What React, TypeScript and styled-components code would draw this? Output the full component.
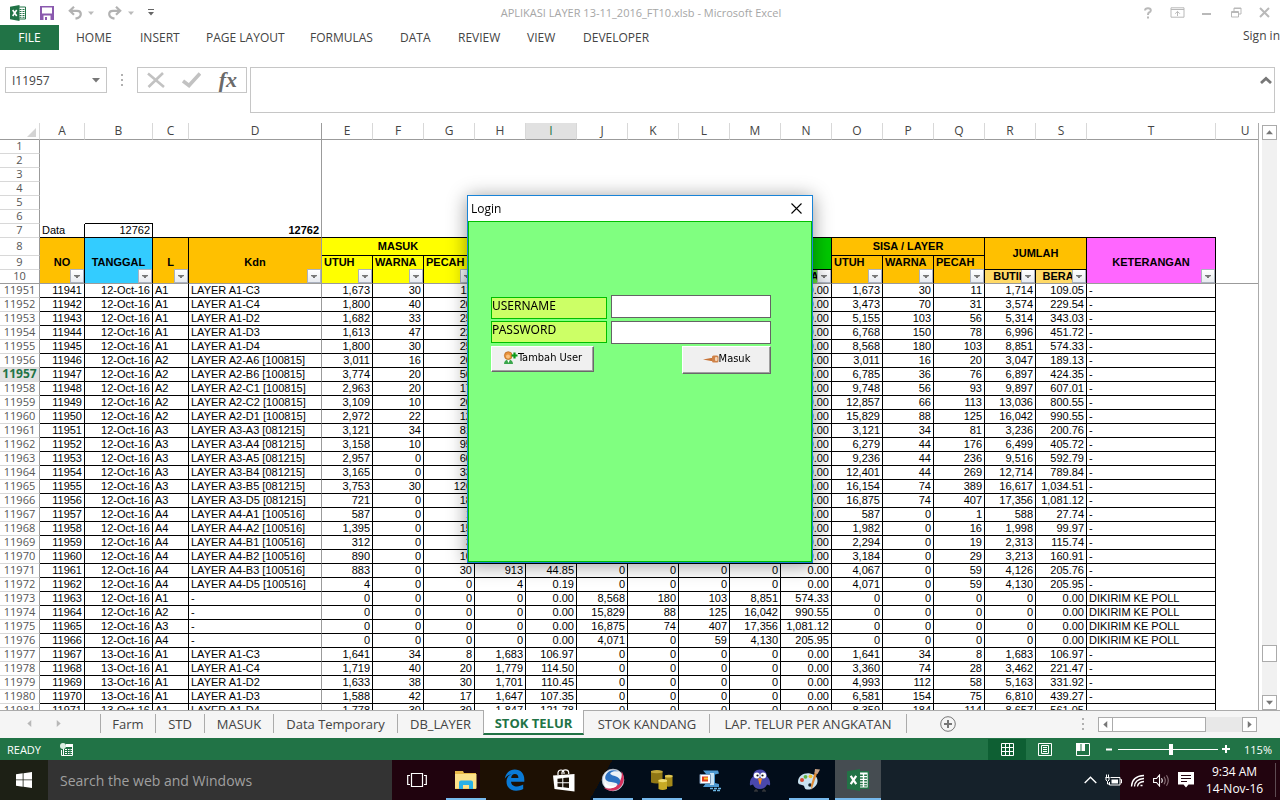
import React from 'react';
import styled, { createGlobalStyle, css } from 'styled-components';

const UI = '"Open Sans", "Noto Sans", sans-serif';
const SHEET = '"Liberation Sans", Arial, sans-serif';
const GREEN = '#217346';
const LINE = '#ababab';
const FREEZE = '#9b9b9b';

const GlobalStyle = createGlobalStyle`
  * { box-sizing: border-box; }
  body { margin: 0; background: #fff; overflow: hidden; font-family: ${UI}; }
  button, input { font: inherit; color: inherit; margin: 0; padding: 0; border: 0; background: none; }
  svg { display: block; }
`;

const Screen = styled.div`
  display: flex;
  flex-direction: column;
  height: 100vh;
  font-size: 12px;
  color: #444;
  background: #fff;
`;

/* ---------- title bar and ribbon ---------- */

const TitleBar = styled.header`
  display: flex;
  align-items: center;
  height: 25px;
  padding: 0 8px 0 10px;
`;

const QuickAccess = styled.div`
  display: flex;
  align-items: center;
  flex: 1;
  gap: 14px;
`;

const QuickPair = styled.div`
  display: flex;
  align-items: center;
  gap: 6px;
`;

const WindowTitle = styled.h1`
  margin: 0;
  font-size: 11px;
  font-weight: 400;
  line-height: 16px;
  color: #a6a6a6;
  white-space: nowrap;
`;

const WindowControls = styled.div`
  display: flex;
  flex: 1;
  justify-content: flex-end;
  align-items: center;
  gap: 14px;
`;

const IconButton = styled.button`
  display: flex;
  align-items: center;
  justify-content: center;
  flex: none;
`;

const Ribbon = styled.nav`
  display: flex;
  height: 25px;
  align-items: stretch;
`;

const FileTab = styled.button`
  width: 59px;
  margin-right: 17px;
  background: ${GREEN};
  color: #fff;
`;

const RibbonTab = styled.button<{ $w: number }>`
  width: ${p => p.$w}px;
  text-align: left;
  white-space: nowrap;
`;

const SignIn = styled.a`
  margin-left: auto;
  align-self: flex-start;
  line-height: 21px;
  color: #444;
  text-decoration: none;
`;

/* ---------- formula bar ---------- */

const FormulaBar = styled.div`
  display: flex;
  align-items: flex-start;
  height: 73px;
  padding: 17px 5px 0;
`;

const NameBox = styled.div`
  display: flex;
  align-items: center;
  width: 102px;
  height: 26px;
  padding: 0 6px;
  border: 1px solid #c6c6c6;
`;

const NameInput = styled.input`
  flex: 1;
  min-width: 0;
  outline: none;
`;

const Dots = styled.div`
  display: flex;
  flex-direction: column;
  gap: 3px;
  align-items: center;
  justify-content: center;
  width: 30px;
  height: 26px;
  span { width: 2px; height: 2px; background: #b0b0b0; }
`;

const FormulaButtons = styled.div`
  display: flex;
  align-items: center;
  justify-content: space-between;
  width: 110px;
  height: 26px;
  padding: 0 9px;
  border: 1px solid #c6c6c6;
`;

const FxLabel = styled.span`
  font: italic bold 22px/24px "Liberation Serif", "Times New Roman", serif;
  color: #6a6a6a;
`;

const FormulaField = styled.div`
  display: flex;
  flex: 1;
  height: 46px;
  margin-left: 3px;
  padding: 8px 2px 0 4px;
  border: 1px solid #c6c6c6;
  align-items: flex-start;
`;

const FormulaInput = styled.input`
  flex: 1;
  outline: none;
`;

/* ---------- worksheet ---------- */

const Workspace = styled.main`
  display: flex;
  flex: 1 1 0;
  min-height: 0;
`;

const GridArea = styled.div`
  flex: 1;
  min-width: 0;
  overflow: hidden;
  border-right: 1px solid ${LINE};
`;

const Sheet = styled.table`
  width: 100%;
  table-layout: fixed;
  border-collapse: separate;
  border-spacing: 0;
  font-family: ${SHEET};
  font-size: 11px;
  line-height: 13px;
  color: #000;
`;

const ColHead = styled.th<{ $active?: boolean; $frozen?: boolean }>`
  height: 17px;
  padding: 0;
  font: 400 12px/16px ${UI};
  color: ${p => (p.$active ? GREEN : '#444')};
  background: ${p => (p.$active ? '#e1e1e1' : '#fff')};
  border-right: 1px solid ${p => (p.$frozen ? FREEZE : '#d8d8d8')};
  border-bottom: 1px solid ${FREEZE};
  &:last-child { padding-left: 16px; border-right: 0; }
`;

const Corner = styled(ColHead)`
  svg { margin: 3px 3px 0 auto; }
`;

const RowHead = styled.th<{ $active?: boolean; $edge?: boolean }>`
  height: 14px;
  padding: 0 0 1px;
  font: ${p => (p.$active ? 700 : 400)} ${p => (p.$active ? 12 : 11)}px/12px ${UI};
  color: ${p => (p.$active ? GREEN : '#555')};
  background: ${p => (p.$active ? '#e1e1e1' : '#fff')};
  border-right: 1px solid ${FREEZE};
  border-bottom: 1px solid ${p => (p.$edge ? FREEZE : '#d8d8d8')};
  white-space: nowrap;
`;

const Cell = styled.td<{
  $align?: 'left' | 'right';
  $right?: string;
  $bottom?: string;
  $bold?: boolean;
}>`
  height: 14px;
  padding: 0 2px;
  overflow: hidden;
  white-space: nowrap;
  text-align: ${p => p.$align ?? 'left'};
  font-weight: ${p => (p.$bold ? 700 : 400)};
  ${p => p.$right && css`border-right: 1px solid ${p.$right};`}
  ${p => p.$bottom && css`border-bottom: 1px solid ${p.$bottom};`}
`;

const Head = styled.th<{
  $bg: string;
  $align?: 'left' | 'center';
  $top?: number;
  $right?: string;
  $last?: boolean;
}>`
  position: relative;
  padding: ${p => p.$top ?? 0}px 2px 0;
  overflow: hidden;
  white-space: nowrap;
  vertical-align: ${p => (p.$align === 'left' ? 'top' : 'middle')};
  text-align: ${p => p.$align ?? 'center'};
  background: ${p => p.$bg};
  border-right: 1px solid ${p => p.$right ?? '#000'};
  border-bottom: 1px solid ${p => (p.$last ? FREEZE : '#000')};
`;

const FilterButton = styled.button`
  position: absolute;
  right: 0;
  bottom: 0;
  display: flex;
  align-items: center;
  justify-content: center;
  width: 14px;
  height: 14px;
  border: 1px solid #abb2bf;
  background: linear-gradient(#fff, #e8ebf0);
`;

const Filter = ({ name }: { name: string }) => (
  <FilterButton aria-label={`Filter column ${name}`}>
    <svg width="6" height="3" viewBox="0 0 6 3"><path d="M0 0h6v1L4 2v1H2V2L0 1z" fill="#777" /></svg>
  </FilterButton>
);

const VerticalBar = styled.div`
  display: flex;
  flex-direction: column;
  width: 21px;
  padding: 2px 3px 0;
`;

const ScrollButton = styled.button`
  display: flex;
  align-items: center;
  justify-content: center;
  flex: none;
  width: 15px;
  height: 15px;
  border: 1px solid ${LINE};
  background: #fff;
`;

const VerticalTrack = styled.div`
  display: flex;
  flex-direction: column;
  justify-content: flex-end;
  flex: 1;
  padding-bottom: 33px;
  background: #f1f1f1;
`;

const VerticalThumb = styled.div`
  height: 17px;
  border: 1px solid ${LINE};
  background: #fff;
`;

/* ---------- sheet tabs ---------- */

const TabStrip = styled.div`
  display: flex;
  height: 28px;
  padding-right: 23px;
  background: #f5f5f5;
  box-shadow: inset 0 1px ${LINE};
`;

const TabArrows = styled.div`
  display: flex;
  align-items: center;
  gap: 22px;
  width: 100px;
  padding: 0 0 2px 26px;
`;

const SheetTab = styled.button<{ $w: number; $active?: boolean; $plain?: boolean }>`
  width: ${p => p.$w}px;
  height: 19px;
  margin-top: 4px;
  font-size: 13px;
  line-height: 18px;
  white-space: nowrap;
  text-align: center;
  border-left: 1px solid ${p => (p.$plain ? 'transparent' : LINE)};
  ${p => p.$active && css`
    height: 25px;
    margin-top: 0;
    padding-top: 2px;
    font-weight: 700;
    color: ${GREEN};
    background: #fff;
    border-right: 1px solid ${LINE};
    border-bottom: 2px solid ${GREEN};
  `}
`;

const NewSheet = styled(IconButton)`
  height: 19px;
  margin-top: 4px;
  padding-left: 33px;
  border-left: 1px solid ${LINE};
`;

const HorizontalBar = styled.div`
  display: flex;
  align-items: center;
  margin-left: auto;
`;

const HorizontalTrack = styled.div`
  width: 129px;
  height: 15px;
  background: #e8e8e8;
`;

const HorizontalThumb = styled.div`
  width: 93px;
  height: 15px;
  border: 1px solid ${LINE};
  border-left: 0;
  background: #fff;
`;

/* ---------- status bar ---------- */

const StatusBar = styled.footer`
  display: flex;
  align-items: center;
  height: 22px;
  padding: 0 8px 0 7px;
  background: ${GREEN};
  color: #fff;
  font-size: 11px;
`;

const StatusText = styled.span`
  width: 53px;
`;

const ViewButton = styled.button<{ $active?: boolean }>`
  display: flex;
  align-items: center;
  justify-content: center;
  width: 38px;
  height: 21px;
  background: ${p => (p.$active ? '#0e5f33' : 'transparent')};
`;

const StatusRight = styled.div`
  display: flex;
  align-items: center;
  margin-left: auto;
`;

const ZoomSlider = styled.input`
  appearance: none;
  width: 100px;
  height: 14px;
  margin: 0 4px;
  background: linear-gradient(#fff, #fff) center / 100% 1px no-repeat;
  &::-webkit-slider-thumb {
    appearance: none;
    width: 4px;
    height: 11px;
    background: #fff;
  }
`;

const ZoomValue = styled.span`
  width: 42px;
  text-align: right;
`;

/* ---------- task bar ---------- */

const TaskBar = styled.footer`
  display: flex;
  height: 40px;
  color: #fff;
  background:
    linear-gradient(90deg, #20030e 37.5%, transparent 37.5% 68%, #15212a 68% 87.5%, #22040f 87.5%),
    linear-gradient(120deg, #1d1003 47%, #020d1a 47%);
`;

const StartButton = styled(IconButton)`
  width: 48px;
  background: #1d2015;
`;

const SearchBox = styled.input`
  width: 344px;
  padding: 0 12px;
  font-size: 14px;
  background: #333;
  outline: none;
  &::placeholder { color: #a0a0a0; opacity: 1; }
`;

const TaskButton = styled.button<{ $open?: boolean; $active?: boolean }>`
  display: flex;
  align-items: center;
  justify-content: center;
  width: 49px;
  background:
    linear-gradient(${p => (p.$open ? '#76b9ed, #76b9ed' : 'transparent, transparent')}) center bottom / ${p => (p.$active ? 46 : 40)}px 2px no-repeat,
    linear-gradient(${p => (p.$active ? '#454c51, #454c51' : 'transparent, transparent')}) center / 46px 100% no-repeat;
`;

const Tray = styled.div`
  display: flex;
  align-items: center;
  gap: 8px;
  margin-left: auto;
  padding-right: 4px;
`;

const Clock = styled.time`
  width: 74px;
  padding-right: 8px;
  border-right: 1px solid #5d4b52;
  font-size: 12px;
  line-height: 17px;
  text-align: center;
  white-space: nowrap;
`;

/* ---------- login window ---------- */

const Overlay = styled.div`
  position: fixed;
  inset: 0;
  display: flex;
  justify-content: center;
  align-items: flex-start;
  padding-top: 195px;
`;

const Dialog = styled.section`
  width: 346px;
  border: 1px solid #1883d7;
  background: #fff;
  color: #000;
  box-shadow: 0 2px 18px rgba(0, 0, 0, 0.42);
`;

const DialogTitle = styled.div`
  display: flex;
  align-items: center;
  justify-content: space-between;
  height: 25px;
  padding: 0 10px 0 3px;
`;

const DialogHeading = styled.h2`
  margin: 0;
  font-size: 12px;
  font-weight: 400;
`;

const LoginForm = styled.form`
  height: 341px;
  padding: 73px 40px 0 22px;
  border: 1px solid #00c000;
  background: #80ff80;
  font: 12px/16px "Noto Sans", sans-serif;
`;

const Fields = styled.div`
  display: flex;
  justify-content: space-between;
`;

const LabelColumn = styled.div`
  display: flex;
  flex-direction: column;
  gap: 2px;
  padding-top: 2px;
`;

const InputColumn = styled.div`
  display: flex;
  flex-direction: column;
  gap: 3px;
`;

const FieldLabel = styled.label`
  width: 116px;
  height: 22px;
  border: 1px solid #00c000;
  background: #ccff66;
`;

const FieldInput = styled.input`
  width: 160px;
  height: 23px;
  padding: 0 3px;
  border: 1px solid #646464;
  background: #fff;
  outline: none;
`;

const Actions = styled.div`
  display: flex;
  justify-content: space-between;
  align-items: flex-start;
  margin-top: 2px;
`;

const ActionButton = styled.button<{ $w: number; $h: number }>`
  display: flex;
  align-items: center;
  justify-content: center;
  width: ${p => p.$w}px;
  height: ${p => p.$h}px;
  padding-bottom: 3px;
  background: #f0f0f0;
  border: 1px solid;
  border-color: #fff #696969 #696969 #fff;
  box-shadow: inset -1px -1px #a0a0a0;
  font: 11px/14px "DejaVu Sans Condensed", "DejaVu Sans", sans-serif;
  white-space: nowrap;
`;

/* ---------- icons ---------- */

const ExcelIcon = ({ size }: { size: number }) => (
  <svg width={size} height={size} viewBox="0 0 16 16">
    <path d="M8 2h7.500v12H8z" fill="#fff" stroke={GREEN} />
    <path d="M9.500 4.500h2M12.500 4.500h2M9.500 6.500h2M12.500 6.500h2M9.500 8.500h2M12.500 8.500h2M9.500 10.500h2M12.500 10.500h2M9.500 12.300h2M12.500 12.300h2" stroke={GREEN} />
    <path d="M0 1.700 9.500 0v16L0 14.300z" fill={GREEN} />
    <path d="M2.700 5l4 6M6.700 5l-4 6" stroke="#fff" strokeWidth="1.600" />
  </svg>
);

const Caret = ({ fill = '#777', w = 7, dir = 'down' }: { fill?: string; w?: number; dir?: string }) => {
  const turn = { down: 0, left: 90, up: 180, right: 270 }[dir];
  return (
    <svg width={w} height={w} viewBox="0 0 8 8"><path d="M0 2h8L4 6.500z" fill={fill} transform={`rotate(${turn} 4 4)`} /></svg>
  );
};

const UndoIcon = ({ flip }: { flip?: boolean }) => (
  <svg width="14" height="14" viewBox="0 0 14 14" fill="none" stroke="#b2b2b2" strokeWidth="2.200">
    <g transform={flip ? 'translate(14 0) scale(-1 1)' : undefined}>
      <path d="M6 .8 1.800 4.800l4.200 4M2 4.800h7c2.500 0 3.800 1.500 3.800 3.200 0 2.200-2 4-5.300 4.600" />
    </g>
  </svg>
);

/* ---------- data ---------- */

const COLUMNS: [string, number | undefined][] = [
  ['A', 45], ['B', 68], ['C', 36], ['D', 133], ['E', 51], ['F', 51], ['G', 51], ['H', 51],
  ['I', 51], ['J', 51], ['K', 51], ['L', 51], ['M', 51], ['N', 51], ['O', 51], ['P', 51],
  ['Q', 51], ['R', 51], ['S', 51], ['T', 129], ['U', undefined],
];

// pen | kandang | masuk | keluar | sisa, each group split on spaces
const RECORDS = `
A1|LAYER A1-C3|1,673 30 11 . .|. . . . 0.00|1,673 30 11 1,714 109.05
A1|LAYER A1-C4|1,800 40 20 . .|. . . . 0.00|3,473 70 31 3,574 229.54
A1|LAYER A1-D2|1,682 33 25 . .|. . . . 0.00|5,155 103 56 5,314 343.03
A1|LAYER A1-D3|1,613 47 22 . .|. . . . 0.00|6,768 150 78 6,996 451.72
A1|LAYER A1-D4|1,800 30 25 . .|. . . . 0.00|8,568 180 103 8,851 574.33
A2|LAYER A2-A6 [100815]|3,011 16 20 . .|. . . . 0.00|3,011 16 20 3,047 189.13
A2|LAYER A2-B6 [100815]|3,774 20 56 . .|. . . . 0.00|6,785 36 76 6,897 424.35
A2|LAYER A2-C1 [100815]|2,963 20 17 . .|. . . . 0.00|9,748 56 93 9,897 607.01
A2|LAYER A2-C2 [100815]|3,109 10 20 . .|. . . . 0.00|12,857 66 113 13,036 800.55
A2|LAYER A2-D1 [100815]|2,972 22 12 . .|. . . . 0.00|15,829 88 125 16,042 990.55
A3|LAYER A3-A3 [081215]|3,121 34 81 . .|. . . . 0.00|3,121 34 81 3,236 200.76
A3|LAYER A3-A4 [081215]|3,158 10 95 . .|. . . . 0.00|6,279 44 176 6,499 405.72
A3|LAYER A3-A5 [081215]|2,957 0 60 . .|. . . . 0.00|9,236 44 236 9,516 592.79
A3|LAYER A3-B4 [081215]|3,165 0 33 . .|. . . . 0.00|12,401 44 269 12,714 789.84
A3|LAYER A3-B5 [081215]|3,753 30 120 . .|. . . . 0.00|16,154 74 389 16,617 1,034.51
A3|LAYER A3-D5 [081215]|721 0 18 . .|. . . . 0.00|16,875 74 407 17,356 1,081.12
A4|LAYER A4-A1 [100516]|587 0 1 . .|. . . . 0.00|587 0 1 588 27.74
A4|LAYER A4-A2 [100516]|1,395 0 15 . .|. . . . 0.00|1,982 0 16 1,998 99.97
A4|LAYER A4-B1 [100516]|312 0 3 . .|. . . . 0.00|2,294 0 19 2,313 115.74
A4|LAYER A4-B2 [100516]|890 0 10 . .|. . . . 0.00|3,184 0 29 3,213 160.91
A4|LAYER A4-B3 [100516]|883 0 30 913 44.85|0 0 0 0 0.00|4,067 0 59 4,126 205.76
A4|LAYER A4-D5 [100516]|4 0 0 4 0.19|0 0 0 0 0.00|4,071 0 59 4,130 205.95
A1|-|0 0 0 0 0.00|8,568 180 103 8,851 574.33|0 0 0 0 0.00
A2|-|0 0 0 0 0.00|15,829 88 125 16,042 990.55|0 0 0 0 0.00
A3|-|0 0 0 0 0.00|16,875 74 407 17,356 1,081.12|0 0 0 0 0.00
A4|-|0 0 0 0 0.00|4,071 0 59 4,130 205.95|0 0 0 0 0.00
A1|LAYER A1-C3|1,641 34 8 1,683 106.97|0 0 0 0 0.00|1,641 34 8 1,683 106.97
A1|LAYER A1-C4|1,719 40 20 1,779 114.50|0 0 0 0 0.00|3,360 74 28 3,462 221.47
A1|LAYER A1-D2|1,633 38 30 1,701 110.45|0 0 0 0 0.00|4,993 112 58 5,163 331.92
A1|LAYER A1-D3|1,588 42 17 1,647 107.35|0 0 0 0 0.00|6,581 154 75 6,810 439.27
A1|LAYER A1-D4|1,778 30 39 1,847 121.78|0 0 0 0 0.00|8,359 184 114 8,657 561.05
`.trim().split('\n').map((line, i) => {
  const [pen, kandang, ...groups] = line.split('|');
  return {
    no: 11941 + i,
    date: i < 26 ? '12-Oct-16' : '13-Oct-16',
    pen,
    kandang,
    values: groups.join(' ').split(' ').map(v => (v === '.' ? '' : v)),
    note: kandang === '-' ? 'DIKIRIM KE POLL' : '-',
  };
});

const RIBBON: [string, number][] = [
  ['HOME', 64], ['INSERT', 66], ['PAGE LAYOUT', 104], ['FORMULAS', 90],
  ['DATA', 58], ['REVIEW', 69], ['VIEW', 56], ['DEVELOPER', 80],
];

const SHEETS: [string, number][] = [
  ['Farm', 55], ['STD', 49], ['MASUK', 69], ['Data Temporary', 124], ['DB_LAYER', 86],
  ['STOK TELUR', 101], ['STOK KANDANG', 125], ['LAP. TELUR PER ANGKATAN', 197],
];

const ORANGE = '#ffc000';
const YELLOW = '#ffff00';
const DEEP_GREEN = '#00c800';

function Worksheet() {
  return (
    <Sheet>
      <colgroup>
        <col width={40} />
        {COLUMNS.map(([name, w]) => <col key={name} width={w} />)}
      </colgroup>
      <thead>
        <tr>
          <Corner>
            <svg width="9" height="9" viewBox="0 0 9 9"><path d="M9 0v9H0z" fill="#d4d4d4" /></svg>
          </Corner>
          {COLUMNS.map(([name]) => (
            <ColHead key={name} scope="col" $active={name === 'I'} $frozen={name === 'D'}>{name}</ColHead>
          ))}
        </tr>
      </thead>
      <tbody>
        {[1, 2, 3, 4, 5, 6].map(n => (
          <tr key={n}>
            <RowHead scope="row">{n}</RowHead>
            <Cell />
            <Cell $bottom={n === 6 ? '#000' : undefined} />
            <Cell />
            <Cell $right={FREEZE} />
            <Cell colSpan={17} />
          </tr>
        ))}
        <tr>
          <RowHead scope="row">7</RowHead>
          <Cell $right="#000" $bottom="#000">Data</Cell>
          <Cell $right="#000" $bottom="#000" $align="right">12762</Cell>
          <Cell $bottom="#000" />
          <Cell $right={FREEZE} $bottom="#000" $align="right" $bold>12762</Cell>
          <Cell colSpan={16} $bottom="#000" />
          <Cell />
        </tr>
        <tr style={{ height: 18 }}>
          <RowHead scope="row">8</RowHead>
          <Head rowSpan={3} $bg={ORANGE} $top={4} $last>NO<Filter name="A" /></Head>
          <Head rowSpan={3} $bg="#33ccff" $top={4} $last>TANGGAL<Filter name="B" /></Head>
          <Head rowSpan={3} $bg={ORANGE} $top={4} $last>L<Filter name="C" /></Head>
          <Head rowSpan={3} $bg={ORANGE} $top={4} $last $right={FREEZE}>Kdn<Filter name="D" /></Head>
          <Head colSpan={3} $bg={YELLOW}>MASUK</Head>
          <Head colSpan={2} rowSpan={2} $bg={YELLOW} />
          <Head colSpan={3} $bg={DEEP_GREEN} />
          <Head colSpan={2} rowSpan={2} $bg={DEEP_GREEN} />
          <Head colSpan={3} $bg={ORANGE}>SISA / LAYER</Head>
          <Head colSpan={2} rowSpan={2} $bg={ORANGE}>JUMLAH</Head>
          <Head rowSpan={3} $bg="#ff66ff" $top={4} $last>KETERANGAN<Filter name="T" /></Head>
          <Cell />
        </tr>
        <tr>
          <RowHead scope="row">9</RowHead>
          <Head rowSpan={2} $bg={YELLOW} $align="left" $last>UTUH<Filter name="E" /></Head>
          <Head rowSpan={2} $bg={YELLOW} $align="left" $last>WARNA<Filter name="F" /></Head>
          <Head rowSpan={2} $bg={YELLOW} $align="left" $last>PECAH<Filter name="G" /></Head>
          <Head rowSpan={2} $bg={DEEP_GREEN} $last />
          <Head rowSpan={2} $bg={DEEP_GREEN} $last />
          <Head rowSpan={2} $bg={DEEP_GREEN} $last />
          <Head rowSpan={2} $bg={ORANGE} $align="left" $last>UTUH<Filter name="O" /></Head>
          <Head rowSpan={2} $bg={ORANGE} $align="left" $last>WARNA<Filter name="P" /></Head>
          <Head rowSpan={2} $bg={ORANGE} $align="left" $last>PECAH<Filter name="Q" /></Head>
          <Cell />
        </tr>
        <tr>
          <RowHead scope="row" $edge>10</RowHead>
          <Head $bg="#ffff99" $last />
          <Head $bg="#ffff99" $last />
          <Head $bg="#66e03c" $last />
          <Head $bg="#66e03c" $last>BERAT<Filter name="N" /></Head>
          <Head $bg="#ffd966" $last>BUTIR<Filter name="R" /></Head>
          <Head $bg="#ffd966" $last>BERAT<Filter name="S" /></Head>
          <Cell $bottom={FREEZE} />
        </tr>
        {RECORDS.map(r => (
          <tr key={r.no}>
            <RowHead scope="row" $active={r.no === 11947}>{r.no + 10}</RowHead>
            <Cell $align="right" $right="#000" $bottom="#000">{r.no}</Cell>
            <Cell $align="right" $right="#000" $bottom="#000">{r.date}</Cell>
            <Cell $right="#000" $bottom="#000">{r.pen}</Cell>
            <Cell $right={FREEZE} $bottom="#000">{r.kandang}</Cell>
            {r.values.map((v, i) => (
              <Cell key={i} $align="right" $right="#000" $bottom="#000">{v}</Cell>
            ))}
            <Cell $right="#000" $bottom="#000">{r.note}</Cell>
            <Cell />
          </tr>
        ))}
      </tbody>
    </Sheet>
  );
}

function LoginWindow() {
  return (
    <Overlay>
      <Dialog role="dialog" aria-labelledby="login-title">
        <DialogTitle>
          <DialogHeading id="login-title">Login</DialogHeading>
          <IconButton aria-label="Close">
            <svg width="11" height="11" viewBox="0 0 11 11"><path d="M.5.500l10 10M10.500.500l-10 10" stroke="#000" strokeWidth="1.100" /></svg>
          </IconButton>
        </DialogTitle>
        <LoginForm onSubmit={e => e.preventDefault()}>
          <Fields>
            <LabelColumn>
              <FieldLabel htmlFor="username">USERNAME</FieldLabel>
              <FieldLabel htmlFor="password">PASSWORD</FieldLabel>
            </LabelColumn>
            <InputColumn>
              <FieldInput id="username" type="text" />
              <FieldInput id="password" type="password" />
            </InputColumn>
          </Fields>
          <Actions>
            <ActionButton type="button" $w={103} $h={26}>
              <svg width="15" height="14" viewBox="0 0 15 14">
                <path d="M1 13c0-3 2-4.500 4.500-4.500S10 10 10 13z" fill="#3aa64c" />
                <path d="M4 8.500h3L5.500 12z" fill="#fff" />
                <circle cx="5.300" cy="4.600" r="3.900" fill="#e8923a" stroke="#b5651d" strokeWidth=".7" />
                <circle cx="5" cy="5.500" r="2" fill="#fbc27f" />
                <path d="M11.500 1.500v6M8.500 4.500h6" stroke="#0a9a1a" strokeWidth="2.200" />
              </svg>
              Tambah User
            </ActionButton>
            <ActionButton type="submit" $w={89} $h={28}>
              <svg width="16" height="10" viewBox="0 0 16 10">
                <path d="M0 5.500 8 4h2v3H8z" fill="#c87437" />
                <rect x="9" y="1.500" width="6.500" height="7" rx="1.500" fill="#cf8248" />
                <rect x="12" y="3" width="2.500" height="4" rx="1" fill="#f5d4b4" />
              </svg>
              Masuk
            </ActionButton>
          </Actions>
        </LoginForm>
      </Dialog>
    </Overlay>
  );
}

function Tasks() {
  return (
    <>
      <TaskButton aria-label="Task view">
        <svg width="20" height="16" viewBox="0 0 20 16" fill="none" stroke="#fff" strokeWidth="1.200">
          <path d="M4.500 1.500h11v13h-11zM3 3.500H.7v9H3M17 3.500h2.300v9H17" />
        </svg>
      </TaskButton>
      <TaskButton $open aria-label="File Explorer">
        <svg width="22" height="20" viewBox="0 0 22 20">
          <path d="M0 1h8l1 2h12v16H0z" fill="#e9b949" />
          <path d="M0 4h21.500v14.500H0z" fill="#fce08a" />
          <path d="M4 19v-6.500q0-2 2-2h10q2 0 2 2V19h-4v-4H8v4z" fill="#29b0e8" />
        </svg>
      </TaskButton>
      <TaskButton aria-label="Edge">
        <svg width="21" height="22" viewBox="0 0 21 22">
          <path d="M.8 9.800C1.500 4.200 5.400.6 10.700.6c6 0 9.600 4.200 9.600 9.800v2.300H7c.2 3.200 2.800 4.700 6 4.700 2.300 0 4.300-.6 6.200-1.800v4.500c-2 1.100-4.300 1.600-7 1.600-5.800 0-9.700-3.500-9.700-8.900 0-3.500 1.800-6.300 5-7.800C4.300 5.900 2.200 7.500.8 9.800zM7.200 9h7.200c0-2.700-1.300-4.100-3.500-4.100S7.400 6.400 7.200 9z" fill="#0a7ad6" />
        </svg>
      </TaskButton>
      <TaskButton aria-label="Store">
        <svg width="22" height="23" viewBox="0 0 22 23">
          <path d="M0 6.500 21.500 5v17.500L1.500 20z" fill="#fff" />
          <path d="M5 6V3.500Q5.500 1 8 1t3 2.500V5M9 5.500V3.500Q9.500.8 12.500.8t3.200 2.700V5" fill="none" stroke="#fff" strokeWidth="1.200" />
          <path d="M4.500 9.700l4.800-.5v4H4.500zM10.300 9.100l5.700-.6v4.700h-5.700zM4.500 14.200h4.800v4l-4.800-.5zM10.300 14.200H16V19l-5.700-.7z" fill="#1a1108" />
        </svg>
      </TaskButton>
      <TaskButton $open aria-label="Browser">
        <svg width="24" height="24" viewBox="0 0 24 24">
          <circle cx="12" cy="12" r="10.800" fill="#eef2f7" stroke="#b9c2cf" strokeWidth=".8" />
          <path d="M20.500 3c3.500 5 3 12-1.500 16.500S6 23.500 2.500 19.500c5.500 2 11 .8 14.500-3.500S21.500 7 20.500 3z" fill="#d6305c" />
          <path d="M17.500 3.500C12.500.8 6.500 2.800 4.700 7.200c-1.700 4.500 1.300 6.300 5.300 6.800s7 1 7 3.500c3.500-3 2.800-7.500-2.500-9.200-4-1.200-6-2-4.800-3.500s4.300-2 7.800-1.300z" fill="#2e72c2" />
          <path d="M4 13.500c2 4.500 7 6 12.500 3.500-3 4-10.500 4.500-13 .5z" fill="#fff" />
        </svg>
      </TaskButton>
      <TaskButton $open aria-label="Database">
        <svg width="24" height="22" viewBox="0 0 24 22">
          <path d="M1 2h11.500v11.500q-6 2-11.500 0z" fill="#8f7715" /><path d="M1 2q6-2 11.500 0v1.500q-6 1.500-11.500 0z" fill="#c4aa3a" />
          <path d="M15 6.500h7.500V17q-4 1.500-7.500 0z" fill="#a58a18" /><path d="M15 6.500q4-1.500 7.500 0V8q-4 1.200-7.500 0z" fill="#e0c755" />
          <path d="M8.500 11H17v9q-4.500 2-8.500 0z" fill="#c7aa25" /><path d="M8.500 11q4.500-1.800 8.500 0v1.500q-4.500 1.500-8.500 0z" fill="#eedb72" />
        </svg>
      </TaskButton>
      <TaskButton aria-label="Archive tool">
        <svg width="23" height="23" viewBox="0 0 23 23">
          <path d="M4 1.500h15l1 3-4 1v8.500l4 1v3H4l3-4V5z" fill="#4f9ad2" />
          <path d="M11 4h4v12h-4z" fill="#c7e2f3" />
          <path d="M1 5.500h10.500v9H1z" fill="#fff" stroke="#7d97b4" />
          <path d="M3 7.500h6v5H3z" fill="#e33d1e" /><path d="M5 8.500h4v2H5z" fill="#ffc62e" />
          <path d="M11 19.500h11M14 21.500h8" stroke="#6db6e4" strokeWidth="1.500" strokeDasharray="3 1" />
        </svg>
      </TaskButton>
      <TaskButton aria-label="Bird">
        <svg width="22" height="23" viewBox="0 0 22 23">
          <path d="M11 .5c4.500 0 7 3 7 7 2.500 2 3.500 5 3 9l-3-1c-1 3-4 4.500-7 4.500s-6-1.500-7-4.500l-3 1c-.5-4 .5-7 3-9 0-4 2.500-7 7-7z" fill="#4a48ad" />
          <circle cx="7.800" cy="6.500" r="3" fill="#fff" /><circle cx="14.200" cy="6.500" r="3" fill="#fff" />
          <circle cx="8.500" cy="6.500" r="1.100" fill="#111" /><circle cx="13.500" cy="6.500" r="1.100" fill="#111" />
          <path d="M9 9.500q2-1 4 0l-1.500 6h-1z" fill="#f18a22" />
          <path d="M7 20v2M15 20v2M5 22h4M13 22h4" stroke="#444" />
        </svg>
      </TaskButton>
      <TaskButton $open aria-label="Paint">
        <svg width="24" height="24" viewBox="0 0 24 24">
          <path d="M1 14C1 8 7 4.500 13 5.500c5 .7 8 4 7.500 8-.5 5-5.500 8.500-10.500 8-3-.3-2-3-3.500-4S1 17 1 14z" fill="#c9e2f0" />
          <circle cx="5" cy="12" r="2" fill="#d9482e" /><circle cx="8.500" cy="8.800" r="1.900" fill="#5eb445" />
          <circle cx="13.500" cy="8.300" r="1.900" fill="#f0c02d" /><circle cx="13" cy="17" r="1.800" fill="#15232c" />
          <path d="M20.500 4 16 17.500 14.500 22l-.5-5L18 3.500z" fill="#e08b36" />
          <path d="M17.500 5 18 1l5 .5-2.500 4.500z" fill="#c9a284" />
        </svg>
      </TaskButton>
      <TaskButton $open $active aria-label="Excel"><ExcelIcon size={22} /></TaskButton>
    </>
  );
}

export default function App() {
  return (
    <>
      <GlobalStyle />
      <Screen>
        <TitleBar>
          <QuickAccess>
            <ExcelIcon size={16} />
            <IconButton aria-label="Save">
              <svg width="14" height="14" viewBox="0 0 14 14">
                <path d="M0 0h14v14H0z" fill="#8a59ae" /><path d="M2 1.500h10v6H2zM3.500 9.500h7V14h-7z" fill="#fff" />
                <path d="M5 11h2v3H5z" fill="#8a59ae" />
              </svg>
            </IconButton>
            <QuickPair>
              <IconButton aria-label="Undo"><UndoIcon /></IconButton>
              <Caret w={6} fill="#bbb" />
            </QuickPair>
            <QuickPair>
              <IconButton aria-label="Redo"><UndoIcon flip /></IconButton>
              <Caret w={6} fill="#bbb" />
            </QuickPair>
            <IconButton aria-label="Customize">
              <svg width="6" height="7" viewBox="0 0 6 7"><path d="M0 0h6v1H0zM0 3h6L3 6.500z" fill="#666" /></svg>
            </IconButton>
          </QuickAccess>
          <WindowTitle>APLIKASI LAYER 13-11_2016_FT10.xlsb - Microsoft Excel</WindowTitle>
          <WindowControls>
            <IconButton aria-label="Help">
              <svg width="16" height="12" viewBox="0 0 16 12" fill="none" stroke="#b9b9b9" strokeWidth="2"><path d="M5 3.500Q5.200 1.200 8 1.200t2.800 2.300Q10.800 5 9 5.500 8 6 8 8M8 9.500v2" /></svg>
            </IconButton>
            <IconButton aria-label="Ribbon display options">
              <svg width="15" height="11" viewBox="0 0 15 11" fill="none" stroke="#b9b9b9"><path d="M1 .8h13v9.400H1zM1 2.500h13M7.500 9V4.500M5.200 6.700l2.300-2.300 2.300 2.300" /></svg>
            </IconButton>
            <IconButton aria-label="Minimize">
              <svg width="15" height="11" viewBox="0 0 15 11"><path d="M3 6h9v2H3z" fill="#b9b9b9" /></svg>
            </IconButton>
            <IconButton aria-label="Restore">
              <svg width="15" height="11" viewBox="0 0 15 11" fill="none" stroke="#b9b9b9"><path d="M3.500 4.500h7v5.500h-7zM3.500 5.500h7M6 4V1h7v6h-2.500M6 1.500h7" /></svg>
            </IconButton>
            <IconButton aria-label="Close Excel">
              <svg width="15" height="11" viewBox="0 0 15 11" stroke="#b9b9b9" strokeWidth="2"><path d="M3 1l9 9M12 1l-9 9" /></svg>
            </IconButton>
          </WindowControls>
        </TitleBar>
        <Ribbon>
          <FileTab>FILE</FileTab>
          {RIBBON.map(([name, w]) => <RibbonTab key={name} $w={w}>{name}</RibbonTab>)}
          <SignIn href="#signin">Sign in</SignIn>
        </Ribbon>
        <FormulaBar>
          <NameBox>
            <NameInput aria-label="Name box" defaultValue="I11957" />
            <IconButton aria-label="Show names"><Caret w={8} /></IconButton>
          </NameBox>
          <Dots><span /><span /><span /></Dots>
          <FormulaButtons>
            <IconButton aria-label="Cancel">
              <svg width="18" height="16" viewBox="0 0 18 16" stroke="#c2c2c2" strokeWidth="2.600"><path d="M1 1.500 17 15M16 1 1.500 15" /></svg>
            </IconButton>
            <IconButton aria-label="Enter">
              <svg width="19" height="16" viewBox="0 0 19 16" fill="none" stroke="#c2c2c2" strokeWidth="3.600"><path d="M1 9l6 4.500L18 1.500" /></svg>
            </IconButton>
            <IconButton aria-label="Insert function"><FxLabel>fx</FxLabel></IconButton>
          </FormulaButtons>
          <FormulaField>
            <FormulaInput aria-label="Formula" />
            <IconButton aria-label="Collapse formula bar">
              <svg width="12" height="8" viewBox="0 0 12 8" fill="none" stroke="#777" strokeWidth="2.800"><path d="M1 7l5-4.500L11 7" /></svg>
            </IconButton>
          </FormulaField>
        </FormulaBar>
        <Workspace>
          <GridArea><Worksheet /></GridArea>
          <VerticalBar>
            <ScrollButton aria-label="Scroll up"><Caret dir="up" /></ScrollButton>
            <VerticalTrack><VerticalThumb /></VerticalTrack>
            <ScrollButton aria-label="Scroll down"><Caret /></ScrollButton>
          </VerticalBar>
        </Workspace>
        <TabStrip>
          <TabArrows>
            <Caret dir="left" w={7} fill="#b8b8b8" />
            <Caret dir="right" w={7} fill="#b8b8b8" />
          </TabArrows>
          {SHEETS.map(([name, w]) => (
            <SheetTab key={name} $w={w} $active={name === 'STOK TELUR'} $plain={name === 'STOK KANDANG'}>{name}</SheetTab>
          ))}
          <NewSheet aria-label="New sheet">
            <svg width="16" height="16" viewBox="0 0 16 16" fill="none" stroke="#777"><circle cx="8" cy="8" r="7.300" /><path d="M4 8h8M8 4v8" strokeWidth="2" /></svg>
          </NewSheet>
          <HorizontalBar>
            <Dots><span /><span /><span /></Dots>
            <ScrollButton aria-label="Scroll left"><Caret dir="left" /></ScrollButton>
            <HorizontalTrack><HorizontalThumb /></HorizontalTrack>
            <ScrollButton aria-label="Scroll right"><Caret dir="right" /></ScrollButton>
          </HorizontalBar>
        </TabStrip>
        <StatusBar>
          <StatusText>READY</StatusText>
          <svg width="14" height="13" viewBox="0 0 14 13">
            <path d="M3.500 3h9v9.500h-9z" fill="none" stroke="#fff" />
            <path d="M6 1h7v3H6z" fill="#fff" />
            <path d="M1.500 7v5.500H5M5 6.500h2M8 6.500h1.500M10.500 6.500H12M5 8.500h2M8 8.500h1.500M10.500 8.500H12M5 10.500h2M8 10.500h1.500M10.500 10.500H12" stroke="#fff" fill="none" />
            <circle cx="3" cy="3" r="3" fill="#dbeee2" />
          </svg>
          <StatusRight>
            <ViewButton $active aria-label="Normal view">
              <svg width="13" height="13" viewBox="0 0 13 13" fill="none" stroke="#fff"><path d="M.5.500h12v12H.5zM4.500.500v12M8.500.500v12M.5 4.500h12M.5 8.500h12" /></svg>
            </ViewButton>
            <ViewButton aria-label="Page layout view">
              <svg width="14" height="13" viewBox="0 0 14 13" fill="none" stroke="#fff"><path d="M.5.500h13v12H.5zM3.500 2.500h7v8h-7zM5 4.500h4M5 6.500h4M5 8.500h4" /></svg>
            </ViewButton>
            <ViewButton aria-label="Page break view">
              <svg width="14" height="13" viewBox="0 0 14 13"><path d="M.5.500h13v12H.5z" fill="none" stroke="#fff" /><path d="M0 0h4.500v8H0zM5.500 0h3.500v8H5.500z" fill="#fff" /></svg>
            </ViewButton>
            <IconButton aria-label="Zoom out">
              <svg width="12" height="9" viewBox="0 0 12 9"><path d="M4 3.500h6v2H4z" fill="#fff" /></svg>
            </IconButton>
            <ZoomSlider type="range" aria-label="Zoom" min={10} max={200} defaultValue={110} />
            <IconButton aria-label="Zoom in">
              <svg width="8" height="8" viewBox="0 0 8 8"><path d="M3 0h2v3h3v2H5v3H3V5H0V3h3z" fill="#fff" /></svg>
            </IconButton>
            <ZoomValue>115%</ZoomValue>
          </StatusRight>
        </StatusBar>
        <TaskBar>
          <StartButton aria-label="Start">
            <svg width="16" height="16" viewBox="0 0 16 16" fill="#fff"><path d="M0 2.300 6.700 1.300v6.200H0zM7.500 1.200 16 0v7.500H7.500zM0 8.300h6.700v6.400L0 13.700zM7.500 8.300H16V16l-8.500-1.200z" /></svg>
          </StartButton>
          <SearchBox aria-label="Search" placeholder="Search the web and Windows" />
          <Tasks />
          <Tray>
            <svg width="13" height="8" viewBox="0 0 13 8" fill="none" stroke="#fff" strokeWidth="1.400"><path d="M.7 7 6.500 1.200 12.300 7" /></svg>
            <svg width="17" height="13" viewBox="0 0 17 13" fill="none" stroke="#fff">
              <path d="M5.500 3.500H15v7.500H4.500V8M15.500 5.500h1v3.500h-1M.5 3.500h4M1 3.500V6l1.500 1.500L4 6V3.500M1.500 3V.500M3.500 3V.500M2.500 7.500v2.500h2" />
              <path d="M6.500 5.500H13v4H6.500z" fill="#fff" stroke="none" />
            </svg>
            <svg width="15" height="13" viewBox="0 0 15 13" fill="none" stroke="#fff" strokeWidth="1.300">
              <path d="M1.500 12.500Q2 2 14 1.500M4.500 12.500Q5 5 14 4.500M7.500 12.500Q8 8 14 7.500M10.500 11.500h2" />
            </svg>
            <svg width="17" height="13" viewBox="0 0 17 13" fill="none" stroke="#fff" strokeWidth="1.100">
              <path d="M.6 4.500h2.900L6.500 1v11L3.500 8.500H.6zM8.500 4.200q1.500 2.300 0 4.600" />
              <path d="M11 2.700q2.500 3.800 0 7.600M13.500 1.200q3.500 5.300 0 10.600" stroke="#8a7078" />
            </svg>
            <svg width="16" height="16" viewBox="0 0 16 16"><path d="M0 0h16v12.500h-5.500L8 15.500 5.500 12.500H0z" fill="#fff" /><path d="M3 3.500h10M3 6.500h10M3 9.500h6" stroke="#22040f" /></svg>
            <Clock>9:34 AM<br />14-Nov-16</Clock>
          </Tray>
        </TaskBar>
      </Screen>
      <LoginWindow />
    </>
  );
}
